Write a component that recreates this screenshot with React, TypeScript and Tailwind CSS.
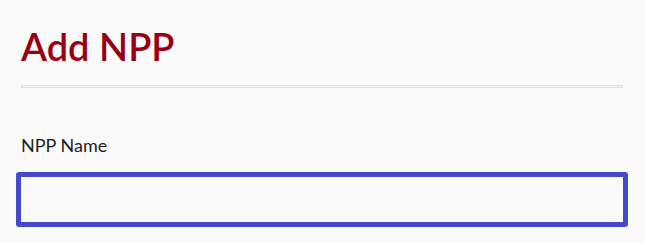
export default function App() {
  return (
    <div className="min-h-screen bg-[#fafafa] px-[21px] pt-[22px] font-['Lato','Liberation_Sans',sans-serif]">
      <h1 className="text-[38px] font-semibold leading-[48px] text-[#9a0013]">Add NPP</h1>
      <hr className="mt-[15px] mr-[1px] h-[3px] border border-[#e2e2e2] bg-[#f4f4f4]" />
      <form className="pt-[46px]">
        <label className="block text-[18px] leading-[22px] text-[#1d1d1d]">NPP Name</label>
        <input
          type="text"
          className="mt-[16px] -ml-[5px] block h-[55px] w-[612px] rounded-[3px] border-[5px] border-[#4249cd] bg-[#fafafa] px-3 outline-none"
        />
      </form>
    </div>
  )
}
